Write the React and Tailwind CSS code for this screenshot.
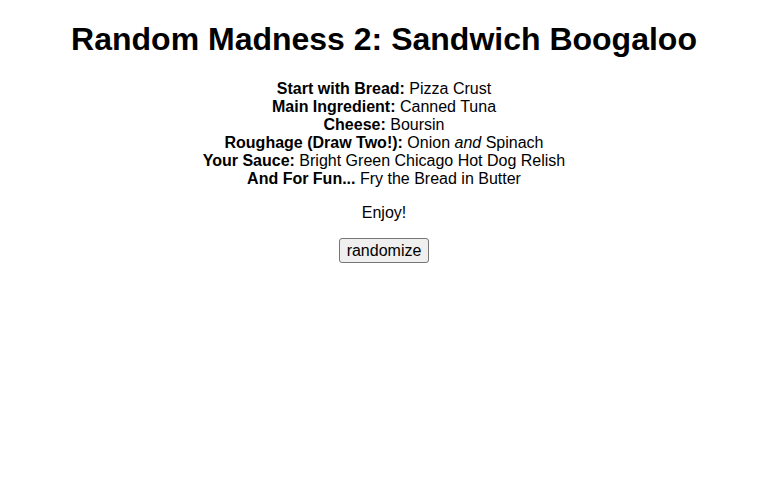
import React, { useState } from 'react';

const OPTIONS = {
  bread: ['Pizza Crust', 'Sourdough', 'Rye', 'Bagel', 'Tortilla'],
  main: ['Canned Tuna', 'Fried Egg', 'Leftover Meatloaf', 'Peanut Butter'],
  cheese: ['Boursin', 'Swiss', 'Pepper Jack', 'Brie'],
  roughage: ['Onion', 'Spinach', 'Pickles', 'Sprouts', 'Tomato'],
  sauce: ['Bright Green Chicago Hot Dog Relish', 'Sriracha Mayo', 'Honey Mustard'],
  fun: ['Fry the Bread in Butter', 'Add Potato Chips', 'Cut It Diagonally'],
};

const pick = (list) => list[Math.floor(Math.random() * list.length)];

const roll = () => {
  const first = pick(OPTIONS.roughage);
  let second = pick(OPTIONS.roughage);
  while (second === first) second = pick(OPTIONS.roughage);
  return {
    bread: pick(OPTIONS.bread),
    main: pick(OPTIONS.main),
    cheese: pick(OPTIONS.cheese),
    roughage: [first, second],
    sauce: pick(OPTIONS.sauce),
    fun: pick(OPTIONS.fun),
  };
};

const App = () => {
  const [sandwich, setSandwich] = useState({
    bread: 'Pizza Crust',
    main: 'Canned Tuna',
    cheese: 'Boursin',
    roughage: ['Onion', 'Spinach'],
    sauce: 'Bright Green Chicago Hot Dog Relish',
    fun: 'Fry the Bread in Butter',
  });

  return (
    <div className="min-h-[480px] bg-white text-black text-center text-base leading-[18px] font-['Liberation_Sans',Arial,sans-serif] px-2 pt-[21px]">
      <h1 className="text-[32px] font-bold leading-[37px] mb-[22px]">
        Random Madness 2: Sandwich Boogaloo
      </h1>

      <p>
        <b>Start with Bread:</b> {sandwich.bread}
        <br />
        <b>Main Ingredient:</b> {sandwich.main}
        <br />
        <b>Cheese:</b> {sandwich.cheese}
        <br />
        <b>Roughage (Draw Two!):</b> {sandwich.roughage[0]} <i>and</i> {sandwich.roughage[1]}
        <br />
        <b>Your Sauce:</b> {sandwich.sauce}
        <br />
        <b>And For Fun...</b> {sandwich.fun}
      </p>

      <p className="mt-4">Enjoy!</p>

      <button
        onClick={() => setSandwich(roll())}
        className="mt-4 px-[7px] py-[3px] leading-[17px] text-base bg-[#efefef] border border-[#767676] rounded-[3px] text-black hover:bg-[#e5e5e5]"
      >
        randomize
      </button>
    </div>
  );
};

export default App;
